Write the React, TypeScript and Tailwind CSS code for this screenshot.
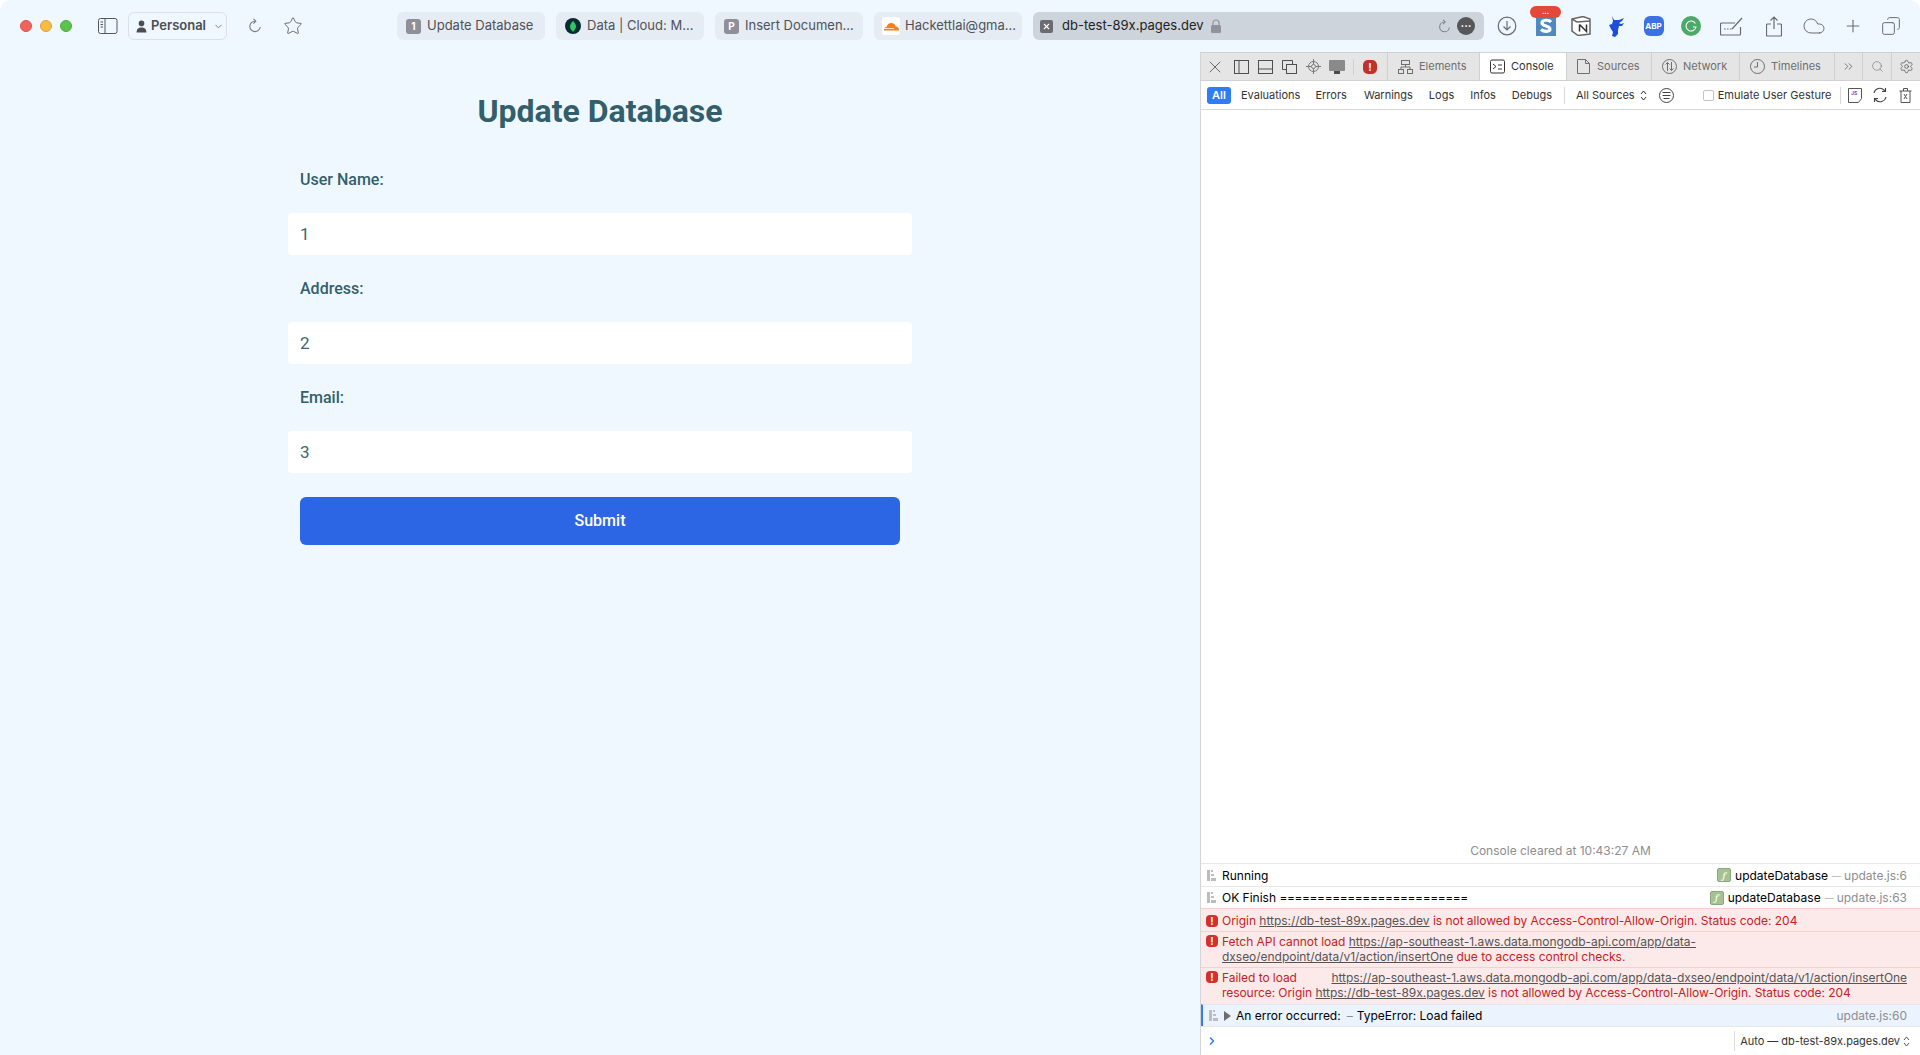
import type { ReactNode } from 'react';
import { ChevronDown, ChevronRight, Cloud, Copy, Plus, Search, Settings, Star, X } from 'lucide-react';

const Ico = ({ s = 16, h, children }: { s?: number; h?: number; children: ReactNode }) => (
  <svg
    width={s}
    height={h ?? s}
    viewBox={`0 0 ${s} ${h ?? s}`}
    fill="none"
    stroke="currentColor"
    strokeWidth="1"
    className="shrink-0"
  >
    {children}
  </svg>
);

const Reload = ({ s = 16 }: { s?: number }) => (
  <svg width={s} height={s} viewBox="0 0 16 16" fill="none" stroke="currentColor" strokeWidth="1.1" className="shrink-0">
    <path d="M13.200 9a5.200 5.200 0 1 1-5.200-5.800" />
    <path d="M6.400 .8L8.800 3.200 6.400 5.600" />
  </svg>
);

function BrowserTab({ icon, label, active }: { icon: ReactNode; label: string; active?: boolean }) {
  return (
    <div className="flex h-7 w-[148px] items-center gap-[6px] rounded-[6px] bg-[#e6ecf3] pl-[9px] text-[13px] text-[#4e5257]">
      {icon}
      <span className={active ? 'text-[#222]' : ''}>{label}</span>
    </div>
  );
}

const LetterIcon = ({ letter }: { letter: string }) => (
  <span className="flex size-[15px] items-center justify-center rounded-[3px] bg-[#8e8f99] text-[10px] font-bold text-white">
    {letter}
  </span>
);

function Toolbar() {
  return (
    <div className="flex h-[52px] shrink-0 items-center">
      <div className="ml-[20px] flex gap-[8px]">
        <span className="size-[12px] rounded-full border border-[#d8544c] bg-[#f1645c]" />
        <span className="size-[12px] rounded-full border border-[#dba13a] bg-[#f8bc44]" />
        <span className="size-[12px] rounded-full border border-[#4fa83f] bg-[#5cc44c]" />
      </div>
      <div className="ml-[26px] text-[#55585c]">
        <Ico s={20} h={16}>
          <rect x=".5" y=".5" width="18.5" height="15" rx="2" />
          <path d="M7 .5v15M2.5 4h2.5M2.5 6.5h2.5M2.5 9h2.5" />
        </Ico>
      </div>
      <div className="ml-[10px] flex h-7 w-[99px] items-center rounded-[6px] border border-[#dcdfe6] pl-[7px] text-[13px] font-semibold text-[#4a4d52]">
        <svg width="11" height="13" viewBox="0 0 11 13" fill="#4a4d52" className="shrink-0">
          <circle cx="5.5" cy="3.4" r="2.8" />
          <path d="M.6 12.5c0-3.6 1.8-5 4.9-5s4.9 1.4 4.9 5z" />
        </svg>
        <span className="ml-[4px]">Personal</span>
        <ChevronDown className="ml-[7px] size-[11px] text-[#777]" />
      </div>
      <div className="ml-[20px] text-[#7a7d82]">
        <Reload />
      </div>
      <div className="ml-[20px] text-[#5f6267]">
        <Star className="size-[20px]" strokeWidth={1.1} />
      </div>

      <div className="ml-[94px] flex items-center gap-[11px]">
        <BrowserTab icon={<LetterIcon letter="1" />} label="Update Database" />
        <BrowserTab
          icon={
            <span className="flex size-[16px] items-center justify-center rounded-full bg-[#062c33]">
              <svg width="6" height="11" viewBox="0 0 6 11" fill="#31c862">
                <path d="M3 0C1 2.2 0 4 0 5.6 0 7.6 1.4 9 3 11c1.6-2 3-3.4 3-5.4C6 4 5 2.2 3 0z" />
              </svg>
            </span>
          }
          label="Data | Cloud: M..."
        />
        <BrowserTab icon={<LetterIcon letter="P" />} label="Insert Documen..." />
        <div className="flex h-7 w-[148px] items-center gap-[5px] rounded-[6px] bg-[#e6ecf3] pl-[8px] text-[13px] text-[#4e5257]">
          <span className="flex size-[18px] items-center justify-center rounded-[3px] bg-white">
            <svg width="17" height="9" viewBox="0 0 17 9">
              <path d="M1 8.5c-.6-2 .6-3.4 2.4-3.4C4 2.600 6 1 8.300 1c2.200 0 3.900 1.300 4.500 3.500 1.800 0 3.400 1.800 3.400 4z" fill="#f38020" />
              <path d="M1 6.500h10" stroke="#fff" strokeWidth=".8" />
            </svg>
          </span>
          Hackettlai@gma...
        </div>
        <div className="flex h-7 w-[451px] items-center rounded-[6px] bg-[#cdd4dc] pl-[7px] text-[13px] text-[#222]">
          <span className="flex size-[13px] items-center justify-center rounded-[2px] bg-[#6b6c72]">
            <X className="size-[9px] text-white" strokeWidth={3} />
          </span>
          <span className="ml-[9px]">db-test-89x.pages.dev</span>
          <svg width="10" height="14" viewBox="0 0 10 14" className="ml-[7px]" fill="#90939a">
            <path d="M2 6V4a3 3 0 0 1 6 0v2" fill="none" stroke="#90939a" strokeWidth="1.2" />
            <rect y="6" width="10" height="8" rx="1.500" />
          </svg>
          <div className="ml-auto mr-[9px] flex items-center gap-[5px]">
            <span className="text-[#7d8085]">
              <Reload s={15} />
            </span>
            <span className="flex size-[18px] items-center justify-center rounded-full bg-[#55575b] pb-[5px] text-[11px] font-bold leading-none text-white">
              ...
            </span>
          </div>
        </div>
      </div>

      <div className="ml-[5px] flex items-center text-[#696c70]">
        <div className="flex w-[36px] justify-center">
          <svg width="20" height="20" viewBox="0 0 20 20" fill="none" stroke="currentColor" strokeWidth="1.2">
            <circle cx="10" cy="10" r="8.800" />
            <path d="M10 5v9M6.500 10.500L10 14l3.500-3.500" />
          </svg>
        </div>
        <div className="relative ml-[2px] flex w-[37px] justify-center">
          <svg width="20" height="20" viewBox="0 0 20 20" fill="none">
            <rect width="20" height="20" fill="#4e8ac0" />
            <path d="M15 6C13 3.500 6 3.500 6 7c0 3.500 8 2.500 8 6 0 3-6 3-9 .5" stroke="#fff" strokeWidth="3.200" />
          </svg>
          <span className="absolute -top-[10px] left-[3px] flex h-[12px] w-[31px] items-center justify-center rounded-full bg-[#e5483a] pb-[2px] text-[7px] font-bold leading-none text-white">
            ...
          </span>
        </div>
        <div className="flex w-[33px] justify-center">
          <svg width="20" height="20" viewBox="0 0 20 20">
            <path d="M1 3l11-2.500L19 3v15l-12 1.500L1 15z" fill="#fff" stroke="#666" strokeWidth="1.500" />
            <path d="M1 3l5 3 13-1" fill="none" stroke="#666" strokeWidth="1.500" />
            <path d="M8.500 8.500v7M8.500 8.500l7 7v-7" fill="none" stroke="#333" strokeWidth="1.500" />
          </svg>
        </div>
        <div className="flex w-[37px] justify-center">
          <svg width="16" height="21" viewBox="0 0 16 21" fill="#1d4fd8">
            <path d="M4 0l2 4 5 0 5-2-2 3-3 2 2 1 3-1-2 3-3 0-1 4 0 4-3 3-3-1 1-4-2-3-2-4 3-1 1-3z" />
          </svg>
        </div>
        <div className="ml-[1px] flex w-[37px] justify-center">
          <span className="flex size-[20px] items-center justify-center rounded-[6px] bg-[#3c71e6] text-[8px] font-bold text-white">
            ABP
          </span>
        </div>
        <div className="flex w-[38px] justify-center">
          <span className="flex size-[20px] items-center justify-center rounded-full bg-[#4ca968]">
            <svg width="12" height="12" viewBox="0 0 12 12" fill="none" stroke="#fff" strokeWidth="1.100">
              <path d="M10.400 3.500A5 5 0 1 0 11 7H8" />
            </svg>
          </span>
        </div>
        <div className="flex w-[43px] justify-center">
          <svg width="23" height="19" viewBox="0 0 23 19" fill="none" stroke="currentColor" strokeWidth="1.200">
            <path d="M15 6H1.500a1 1 0 0 0-1 1v10a1 1 0 0 0 1 1h18a1 1 0 0 0 1-1V10" />
            <path d="M12 12L22 1" />
            <path d="M4.500 12h.8M7.500 12h.8M10.500 12h.8" strokeWidth="1.800" />
          </svg>
        </div>
        <div className="flex w-[41px] justify-center">
          <svg width="16" height="21" viewBox="0 0 16 21" fill="none" stroke="currentColor" strokeWidth="1.200">
            <path d="M8 13V1M4.500 4.500L8 1l3.500 3.500M5 8H1.500a1 1 0 0 0-1 1v10a1 1 0 0 0 1 1h13a1 1 0 0 0 1-1V9a1 1 0 0 0-1-1H11" />
          </svg>
        </div>
        <div className="flex w-[39px] justify-center">
          <Cloud className="size-[24px]" strokeWidth={1} />
        </div>
        <div className="flex w-[39px] justify-center">
          <Plus className="size-[20px]" strokeWidth={1.300} />
        </div>
        <div className="flex w-[38px] justify-center">
          <Copy className="size-[20px] -scale-x-100" strokeWidth={1.200} />
        </div>
      </div>
    </div>
  );
}

const fieldRows = [
  { label: 'User Name:', value: '1' },
  { label: 'Address:', value: '2' },
  { label: 'Email:', value: '3' },
];

function UpdateForm() {
  return (
    <div className="w-[1200px] shrink-0 pt-[40px] font-['Roboto',sans-serif] text-[#325f6b]">
      <div className="mx-auto w-[624px]">
        <h1 className="text-center text-[32px] font-bold leading-[38px]">Update Database</h1>
        <div className="mt-[16px]">
          {fieldRows.map((row) => (
            <div key={row.label} className="pt-[22px]">
              <label className="ml-[12px] block text-[16px] font-medium leading-[24px]">{row.label}</label>
              <div className="mt-[21px] flex h-[42px] items-center rounded-[4px] bg-white pl-[12px] pt-[1px] text-[17px] text-[#3c6773]">
                {row.value}
              </div>
            </div>
          ))}
        </div>
        <button className="mx-[12px] mt-[24px] h-[48px] w-[600px] rounded-[6px] bg-[#2d66e5] text-[16px] font-medium text-white">
          Submit
        </button>
      </div>
    </div>
  );
}

function DevTab({ icon, label, w, active }: { icon: ReactNode; label: string; w: string; active?: boolean }) {
  return (
    <div
      className={`flex h-full items-center gap-[6px] border-r border-[#d0d0d0] pl-[10px] ${w} ${
        active ? 'bg-white text-[#333]' : 'text-[#6e6e6e]'
      }`}
    >
      {icon}
      {label}
    </div>
  );
}

function DevBar() {
  return (
    <>
      <div className="flex h-[29px] shrink-0 items-center border-y border-[#d0d0d0] bg-[#e5e5e5] text-[11px]">
        <div className="flex w-[186px] shrink-0 items-center text-[#4f4f4f]">
          <div className="flex w-[28px] justify-center">
            <X className="size-[20px]" strokeWidth={1} />
          </div>
          <div className="flex w-[24px] justify-center">
            <Ico s={15} h={14}>
              <rect x=".5" y=".5" width="14" height="13" />
              <path d="M5 .5v13" />
            </Ico>
          </div>
          <div className="flex w-[24px] justify-center">
            <Ico s={15} h={14}>
              <rect x=".5" y=".5" width="14" height="13" />
              <path d="M.5 9h14" />
            </Ico>
          </div>
          <div className="flex w-[24px] justify-center">
            <Ico s={15} h={14}>
              <rect x="4.500" y="4.500" width="10" height="9" />
              <path d="M4.500 9.500H.5v-9h10v4" />
            </Ico>
          </div>
          <div className="flex w-[24px] justify-center text-[#777]">
            <Ico s={15}>
              <circle cx="7.500" cy="7.500" r="5" />
              <circle cx="7.500" cy="7.500" r="2" />
              <path d="M7.500 0v5M7.500 10v5M0 7.500h5M10 7.500h5" />
            </Ico>
          </div>
          <div className="flex w-[24px] justify-center">
            <svg width="16" height="14" viewBox="0 0 16 14">
              <rect width="16" height="11" rx="1" fill="#8a8a8a" />
              <rect x="5" y="11" width="6" height="3" fill="#4a4a4a" />
            </svg>
          </div>
          <div className="ml-[4px] h-[16px] w-px bg-[#d0d0d0]" />
          <div className="flex w-[32px] justify-center">
            <span className="flex size-[14px] items-center justify-center rounded-[5px] bg-[#c0302c] text-[10px] font-bold leading-none text-white">
              !
            </span>
          </div>
        </div>
        <div className="flex h-full flex-1 items-center border-l border-[#d0d0d0]">
          <DevTab
            w="w-[92px]"
            label="Elements"
            icon={
              <Ico s={15} h={14}>
                <rect x="3.500" y=".5" width="8" height="4" />
                <rect x=".5" y="9.500" width="5" height="4" />
                <rect x="9.500" y="9.500" width="5" height="4" />
                <path d="M7.500 4.500V7M3 9.500V7h9v2.500" />
              </Ico>
            }
          />
          <DevTab
            w="w-[87px]"
            active
            label="Console"
            icon={
              <Ico s={15}>
                <rect x=".5" y="1" width="14" height="13" rx="1.500" />
                <path d="M3 5l3 2.500L3 10M8 6h4M8 10h4" />
              </Ico>
            }
          />
          <DevTab
            w="w-[85px]"
            label="Sources"
            icon={
              <Ico s={14} h={15}>
                <path d="M.5.5h8l4 4v10H.5zM8.500.5v4h4" />
              </Ico>
            }
          />
          <DevTab
            w="w-[88px]"
            label="Network"
            icon={
              <Ico s={15}>
                <circle cx="7.500" cy="7.500" r="7" />
                <path d="M5.500 12V3.500M3.500 5.500l2-2 2 2M9.500 3v8.500M7.500 9.500l2 2 2-2" />
              </Ico>
            }
          />
          <DevTab
            w="w-[95px]"
            label="Timelines"
            icon={
              <Ico s={15}>
                <circle cx="7.500" cy="7.500" r="7" />
                <path d="M7.500 3v5H4" />
              </Ico>
            }
          />
          <div className="flex h-full w-[28px] items-center justify-center border-r border-[#d0d0d0] text-[#6e6e6e]">
            <ChevronRight className="-mr-[7px] size-[11px]" />
            <ChevronRight className="size-[11px]" />
          </div>
          <div className="flex h-full w-[29px] items-center justify-center border-r border-[#d0d0d0] text-[#777]">
            <Search className="size-[13px]" strokeWidth={1.200} />
          </div>
          <div className="flex h-full flex-1 items-center justify-center text-[#555]">
            <Settings className="size-[15px]" strokeWidth={1.200} />
          </div>
        </div>
      </div>

      <div className="flex h-[29px] shrink-0 items-center border-b border-[#d8d8d8] bg-white pl-[6px] text-[11px] text-[#333]">
        <span className="flex h-[17px] w-[24px] items-center justify-center rounded-[3px] bg-[#2e7cf6] font-semibold text-white">
          All
        </span>
        <span className="ml-[10px]">Evaluations</span>
        <span className="ml-[15px]">Errors</span>
        <span className="ml-[17px]">Warnings</span>
        <span className="ml-[16px]">Logs</span>
        <span className="ml-[16px]">Infos</span>
        <span className="ml-[16px]">Debugs</span>
        <span className="ml-[12px] h-[17px] w-px bg-[#d8d8d8]" />
        <span className="ml-[11px]">All Sources</span>
        <svg width="7" height="11" viewBox="0 0 7 11" fill="none" stroke="#333" className="ml-[5px]">
          <path d="M1 4l2.500-3L6 4M1 7l2.500 3L6 7" />
        </svg>
        <svg width="15" height="15" viewBox="0 0 15 15" fill="none" stroke="#444" className="ml-[12px]">
          <circle cx="7.500" cy="7.500" r="7" />
          <path d="M3.500 4.500h8M3.500 7.500h8M4.500 10.500h6" />
        </svg>
        <span className="ml-[29px] size-[11px] rounded-[2px] border border-[#c4c4c4] bg-white" />
        <span className="ml-[4px] tracking-[0.03px]">Emulate User Gesture</span>
        <span className="ml-[9px] h-[17px] w-px bg-[#d8d8d8]" />
        <svg width="14" height="15" viewBox="0 0 14 15" fill="none" stroke="#555" className="ml-[7px]">
          <path d="M.5.5h13v10l-3 4H.5z" />
          <text x="3" y="7" fontSize="5" fill="#6a4fd0" stroke="none" fontWeight="700">
            JS
          </text>
        </svg>
        <svg width="16" height="16" viewBox="0 0 16 16" fill="none" stroke="#444" strokeWidth="1.100" className="ml-[10px]">
          <path d="M2 6a6 6 0 0 1 10-3l1.500 1.500M14 10a6 6 0 0 1-10 3l-1.500-1.500" />
          <path d="M13.500 1v3.500H10M2.500 15v-3.500H6" />
        </svg>
        <svg width="13" height="15" viewBox="0 0 13 15" fill="none" stroke="#555" className="ml-[11px]">
          <path d="M.5 3h12M4.500 3V.5h4V3M2 3v11.500h9V3M5 6l3 5M8 6l-3 5" />
        </svg>
      </div>
    </>
  );
}

const LogGlyph = () => (
  <svg width="9" height="11" viewBox="0 0 9 11" fill="#bcbcbc" className="ml-[6px] mr-[6px] shrink-0">
    <path d="M0 0h3v11H0zM4 8h5v3H4zM4 4h3v2H4zM4 0h2v2H4z" />
  </svg>
);

const ErrGlyph = () => (
  <span className="ml-[5px] mr-[4px] mt-[1px] flex size-[12px] shrink-0 items-center justify-center rounded-[4px] bg-[#d3302c] text-[10px] font-bold leading-none text-white">
    !
  </span>
);

const FnSource = ({ line }: { line: string }) => (
  <span className="ml-auto mr-[13px] flex items-center">
    <span className="mr-[4px] flex size-[14px] items-center justify-center rounded-[2px] border border-[#8aa87a] bg-[#a6c295] font-serif text-[11px] italic leading-none text-white">
      f
    </span>
    updateDatabase
    <span className="ml-[4px] text-[9px] text-[#b0b0b0]">—</span>
    <span className="ml-[3px] text-[#8e8e8e]">update.js:{line}</span>
  </span>
);

const Url = ({ children }: { children: ReactNode }) => <span className="text-[#555] underline">{children}</span>;

function ConsolePane() {
  return (
    <div className="flex min-h-0 flex-1 flex-col bg-white text-[12px] leading-[15px] text-black">
      <div className="flex flex-1 items-end justify-center pb-[5px] text-[#8e8e8e]">
        Console cleared at 10:43:27 AM
      </div>
      <div className="flex h-[23px] items-center border-t border-[#e8e8e8]">
        <LogGlyph />
        Running
        <FnSource line="6" />
      </div>
      <div className="flex h-[22px] items-center border-t border-[#e8e8e8]">
        <LogGlyph />
        <span>
          OK Finish <span className="tracking-[-0.4px]">=========================</span>
        </span>
        <FnSource line="63" />
      </div>
      <div className="flex h-[23px] items-center border-t border-[#f6d0d0] bg-[#fceaea] tracking-[-0.03px] text-[#c5221f]">
        <ErrGlyph />
        <span>
          Origin <Url>https://db-test-89x.pages.dev</Url> is not allowed by Access-Control-Allow-Origin. Status code: 204
        </span>
      </div>
      <div className="flex h-[36px] items-start border-t border-[#f6d0d0] bg-[#fceaea] pt-[2px] tracking-[-0.03px] text-[#c5221f]">
        <ErrGlyph />
        <span>
          Fetch API cannot load <Url>https://ap-southeast-1.aws.data.mongodb-api.com/app/data-</Url>
          <br />
          <Url>dxseo/endpoint/data/v1/action/insertOne</Url> due to access control checks.
        </span>
      </div>
      <div className="flex h-[37px] items-start border-t border-[#f6d0d0] bg-[#fceaea] pt-[2px] tracking-[-0.06px] text-[#c5221f]">
        <ErrGlyph />
        <div className="mr-[13px] flex-1">
          <div className="flex justify-between">
            <span>Failed to load</span>
            <Url>https://ap-southeast-1.aws.data.mongodb-api.com/app/data-dxseo/endpoint/data/v1/action/insertOne</Url>
          </div>
          resource: Origin <Url>https://db-test-89x.pages.dev</Url> is not allowed by Access-Control-Allow-Origin. Status code: 204
        </div>
      </div>
      <div className="flex h-[22px] items-center border-l-2 border-t border-l-[#2e7cf6] border-t-[#dfe6ef] bg-[#ebf3fe]">
        <span className="-ml-[2px] flex pl-[2px]">
          <LogGlyph />
        </span>
        <span className="mr-[4px] size-0 border-y-[5px] border-l-[7px] border-y-transparent border-l-[#6e6e6e]" />
        <span className="ml-[1px]">An error occurred:</span>
        <span className="ml-[6px] text-[#8e8e8e]">–</span>
        <span className="ml-[4px]">TypeError: Load failed</span>
        <span className="ml-auto mr-[13px] text-[#8e8e8e]">update.js:60</span>
      </div>
      <div className="flex h-[29px] shrink-0 items-center border-t border-[#e8e8e8] text-[11px] text-[#333]">
        <ChevronRight className="ml-[5px] size-[12px] text-[#2e7cf6]" strokeWidth={3} />
        <span className="ml-auto h-[20px] w-px bg-[#dcdcdc]" />
        <span className="ml-[5px] tracking-[-0.05px]">Auto — db-test-89x.pages.dev</span>
        <svg width="7" height="11" viewBox="0 0 7 11" fill="none" stroke="#555" className="ml-[3px] mr-[10px]">
          <path d="M1 4l2.500-3L6 4M1 7l2.500 3L6 7" />
        </svg>
      </div>
    </div>
  );
}

export default function App() {
  return (
    <div className="h-screen overflow-hidden bg-white font-['Inter',sans-serif]">
      <div className="flex h-full flex-col overflow-hidden rounded-t-[10px] bg-[#f0f8ff]">
        <Toolbar />
        <div className="flex min-h-0 flex-1">
          <UpdateForm />
          <div className="flex min-w-0 flex-1 flex-col border-l border-[#d5d5d5]">
            <DevBar />
            <ConsolePane />
          </div>
        </div>
      </div>
    </div>
  );
}
